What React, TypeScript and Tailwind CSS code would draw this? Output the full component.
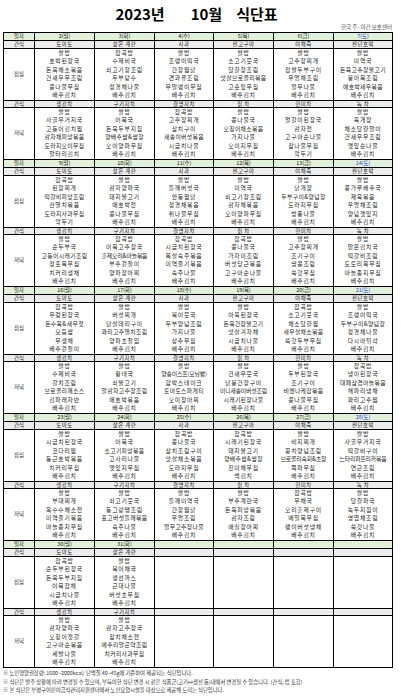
type Week = {
  days: string[];
  snack: string[];
  lunch: string[][];
  tea: string[];
  dinner: string[][];
};

const SNACK = ['토마토', '삶은 계란', '사과', '찐고구마', '야채죽', '찐단호박'];
const TEA = ['생강차', '구기자차', '결명자차', '칡 차', '현미차', '녹 차'];

const weeks: Week[] = [
  {
    days: ['2(월)', '3(화)', '4(수)', '5(목)', '6(금)', '7(토)'],
    snack: SNACK,
    lunch: [
      ['쌀밥', '호박된장국', '돈육채소볶음', '건새우무조림', '콩나물무침', '배추김치'],
      ['잡곡밥', '수제비국', '쇠고기장조림', '두부탕수', '청경채나물', '배추김치'],
      ['쌀밥', '조랭이떡국', '간장찜닭', '견과류조림', '무말랭이무침', '배추김치'],
      ['쌀밥', '소고기뭇국', '달걀장조림', '맛살브로콜리볶음', '고춧잎무침', '배추김치'],
      ['쌀밥', '고추장찌개', '찹쌀두부구이', '우엉채조림', '열무나물', '배추김치'],
      ['쌀밥', '미역국', '돈육고추장불고기', '봉어묵조림', '애호박새우볶음', '배추김치'],
    ],
    tea: TEA,
    dinner: [
      ['쌀밥', '사골우거지국', '고등어김치찜', '감자채피망볶음', '도라지오이무침', '알타리김치'],
      ['쌀밥', '어묵국', '돈육두부지짐', '양배추쌈&쌈장', '오이양파무침', '배추김치'],
      ['잡곡밥', '고추장찌개', '삼치구이', '새송이버섯볶음', '시금치나물', '배추김치'],
      ['쌀밥', '콩나물국', '오징어채소볶음', '가지나물', '오이지무침', '배추김치'],
      ['쌀밥', '얼갈이된장국', '감자전', '고구마순나물', '참나물무침', '깍두기'],
      ['쌀밥', '육개장', '채소달걀말이', '건새우무조림', '깻잎순나물', '배추김치'],
    ],
  },
  {
    days: ['9(월)', '10(화)', '11(수)', '12(목)', '13(금)', '14(토)'],
    snack: SNACK,
    lunch: [
      ['잡곡밥', '된장찌개', '떡갈비피망조림', '잔멸치볶음', '도라지사과무침', '깍두기'],
      ['쌀밥', '감자양파국', '돼지불고기', '애호박전', '콩나물무침', '배추김치'],
      ['쌀밥', '들깨버섯국', '안동찜닭', '청경채볶음', '취나물무침', '배추김치'],
      ['쌀밥', '미역국', '쇠고기장조림', '감자채볶음', '오이양파무침', '배추김치'],
      ['쌀밥', '닭개장', '두부구이&양념장', '도라지무침', '방풍나물', '배추김치'],
      ['쌀밥', '콩가루배추국', '제육볶음', '우엉채조림', '양념깻잎지', '배추김치'],
    ],
    tea: TEA,
    dinner: [
      ['쌀밥', '순두부국', '고등어시래기조림', '청포묵무침', '치커리생채', '배추김치'],
      ['잡곡밥', '어묵고추장국', '훈제오리&마늘볶음', '부추겉절이', '양파장아찌', '배추김치'],
      ['잡곡밥', '시금치된장국', '목살숙주볶음', '미역줄기볶음', '숙주나물', '배추김치'],
      ['잡곡밥', '콩나물국', '가자미조림', '버섯당근볶음', '고구마순나물', '배추김치'],
      ['쌀밥', '고추장찌개', '조기구이', '땅콩조림', '쑥갓무침', '배추김치'],
      ['쌀밥', '맑은김치국', '떡갈비조림', '도토리묵무침', '마늘종지무침', '배추김치'],
    ],
  },
  {
    days: ['16(월)', '17(화)', '18(수)', '19(목)', '20(금)', '21(토)'],
    snack: SNACK,
    lunch: [
      ['잡곡밥', '우렁된장국', '돈수육&새우젓', '모듬쌈', '무생채', '배추겉절이'],
      ['쌀밥', '버섯찌개', '닭살데리구이', '꽈리고추멸치조림', '양파초절임', '배추김치'],
      ['쌀밥', '북어뭇국', '두부양념조림', '가지나물', '상추무침', '배추김치'],
      ['쌀밥', '아욱된장국', '돈육간장불고기', '맛살겨자채', '시금치나물', '배추김치'],
      ['잡곡밥', '소고기뭇국', '채소달걀찜', '새우살채소볶음', '쑥갓두부무침', '배추김치'],
      ['쌀밥', '조랭이떡국', '두부구이&양념장', '청경채나물', '다시마튀각', '배추김치'],
    ],
    tea: TEA,
    dinner: [
      ['쌀밥', '수제비국', '갈치조림', '브로콜리깨소스', '김파래자반', '배추김치'],
      ['쌀밥', '황태국', '쇠불고기', '알감자고추장조림', '애호박볶음', '배추김치'],
      ['쌀밥', '양송이스프(모닝빵)', '함박스테이크', '토마토스파게티', '오이장아찌', '배추김치'],
      ['쌀밥', '건새우뭇국', '닭봉간장구이', '미니새송이버섯조림', '시래기된장나물', '배추김치'],
      ['쌀밥', '두부된장국', '조기구이', '비엔나케찹볶음', '콩나물무침', '배추김치'],
      ['잡곡밥', '냉이된장국', '대패삼겹마늘볶음', '해파리냉채', '꽈리고추찜', '배추김치'],
    ],
  },
  {
    days: ['23(월)', '24(화)', '25(수)', '26(목)', '27(금)', '28(토)'],
    snack: SNACK,
    lunch: [
      ['쌀밥', '시금치된장국', '코다리찜', '둥근호박볶음', '치커리무침', '배추김치'],
      ['쌀밥', '어묵국', '소고기피망볶음', '고사리나물', '깻잎지무침', '배추김치'],
      ['잡곡밥', '콩나물국', '삼치조림구이', '맛살채소볶음', '도라지무침', '배추김치'],
      ['잡곡밥', '시래기된장국', '돼지불고기', '양배추쌈&쌈장', '진미채무침', '백김치'],
      ['쌀밥', '비지찌개', '꽁치양념조림', '브로콜리숙회&초장', '쪽파무침', '배추김치'],
      ['쌀밥', '사골우거지국', '떡갈비구이', '느타리파프리카볶음', '연근조림', '배추김치'],
    ],
    tea: TEA,
    dinner: [
      ['쌀밥', '부대찌개', '옥수수채소전', '미역줄기볶음', '마늘종지무침', '배추김치'],
      ['쌀밥', '쇠고기뭇국', '동그랑땡조림', '표고버섯들깨볶음', '숙주나물', '배추김치'],
      ['쌀밥', '들깨미역국', '간장찜닭', '우엉조림', '열무고추장나물', '배추김치'],
      ['쌀밥', '부추계란국', '돈육피망볶음', '감자조림', '매실장아찌', '배추김치'],
      ['잡곡밥', '무채국', '오리훈제구이', '메밀묵무침', '팽이버섯냉채', '배추김치'],
      ['쌀밥', '달걀파국', '녹두지짐이', '명엽채조림', '쑥갓나물', '배추김치'],
    ],
  },
  {
    days: ['30(월)', '31(화)'],
    snack: SNACK.slice(0, 2),
    lunch: [
      ['잡곡밥', '순두부된장국', '돈육두부지짐', '어묵잡채', '시금치나물', '배추김치'],
      ['쌀밥', '북어채국', '생선까스', '근대나물', '버섯초무침', '배추김치'],
    ],
    tea: TEA.slice(0, 2),
    dinner: [
      ['쌀밥', '감자양파국', '오징어젓갈', '고구마순볶음', '세발나물', '배추김치'],
      ['쌀밥', '감자고추장국', '참치채소전', '메추리알곤약조림', '치커리사과무침', '배추김치'],
    ],
  },
];

const COLS = [0, 1, 2, 3, 4, 5];

function Item({ text }: { text: string }) {
  return (
    <span
      className={`block h-[8.4px] whitespace-nowrap ${
        text.length > 8 ? 'tracking-[-0.1px]' : text.length > 6 ? 'tracking-[0.4px]' : 'tracking-[0.8px]'
      }`}
    >
      {text}
    </span>
  );
}

function WeekRows({ week }: { week: Week }) {
  return (
    <>
      <div className="bg-[#e2efda] h-[7px] flex items-center justify-center">일자</div>
      {COLS.map((i) => (
        <div
          key={`d${i}`}
          className={`bg-[#e2efda] h-[7px] flex items-center justify-center ${i === 5 ? 'text-[#2d3fd3]' : ''}`}
        >
          {week.days[i] ?? ''}
        </div>
      ))}

      <div className="bg-[#ececec] h-[7px] flex items-center justify-center">간식</div>
      {COLS.map((i) => (
        <div key={`s${i}`} className="bg-[#ececec] h-[7px] flex items-center justify-center tracking-[0.5px]">
          {week.snack[i] ?? ''}
        </div>
      ))}

      <div className="bg-white h-[51px] flex items-center justify-center">점심</div>
      {COLS.map((i) => (
        <div key={`l${i}`} className="bg-white h-[51px] flex flex-col items-center text-[5.8px] leading-[8.4px]">
          {(week.lunch[i] ?? []).map((m, j) => (
            <Item key={j} text={m} />
          ))}
        </div>
      ))}

      <div className="bg-[#ececec] h-[6px] flex items-center justify-center">간식</div>
      {COLS.map((i) => (
        <div key={`t${i}`} className="bg-[#ececec] h-[6px] flex items-center justify-center tracking-[0.5px]">
          {week.tea[i] ?? ''}
        </div>
      ))}

      <div className="bg-white h-[51px] flex items-center justify-center">저녁</div>
      {COLS.map((i) => (
        <div key={`n${i}`} className="bg-white h-[51px] flex flex-col items-center text-[5.8px] leading-[8.4px]">
          {(week.dinner[i] ?? []).map((m, j) => (
            <Item key={j} text={m} />
          ))}
        </div>
      ))}
    </>
  );
}

export default function App() {
  return (
    <div className="w-[401px] h-[698px] bg-white text-[#222] font-['Noto_Sans_CJK_KR','Noto_Sans',sans-serif] overflow-hidden">
      <div className="h-[22px] flex items-end justify-center pr-[8px] font-bold text-[15px] leading-[17px] text-black">
        <span>2023년</span>
        <span className="ml-[26px]">10월</span>
        <span className="ml-[14px]">식단표</span>
      </div>
      <div className="h-[10px] flex items-center justify-end pr-[9px] text-[5.5px] leading-[8px] text-[#555]">
        한국 주·야간 보호센터
      </div>
      <div className="ml-[3px] w-[390px] grid grid-cols-[30px_59px_59px_58px_59px_59px_58px] gap-px bg-black p-px text-[5.4px] leading-[7px]">
        {weeks.map((w, i) => (
          <WeekRows key={i} week={w} />
        ))}
      </div>
      <div className="pl-[3px] pt-[1px] text-[5.3px] leading-[8.6px] text-[#333] whitespace-nowrap">
        <p>※ 노인영양권장량: 1600~2000kcal/ 단백질 40~45g에 기준하여 제공되는 식단입니다.</p>
        <p>※ 식단은 발주 상황에 따라 변경될 수 있으며, 부득이한 식단 변경 시 같은 식품군(고기↔생선 등)내에서 변경될 수 있습니다. (간식, 밥 포함)</p>
        <p>※ 본 식단은 부평구어린이급식관리지원센터에서 노인요양시설을 대상으로 제공해 드리는 식단입니다.</p>
      </div>
    </div>
  );
}
